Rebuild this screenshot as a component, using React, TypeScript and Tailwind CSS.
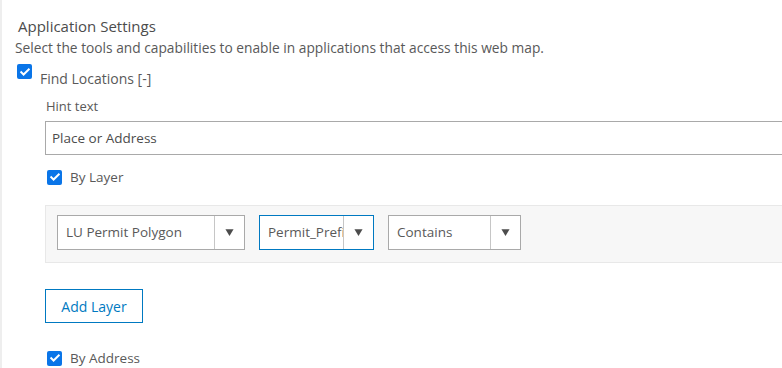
import React from "react";

function Check({ className = "" }: { className?: string }) {
  return (
    <span
      className={`inline-flex h-[15px] w-[15px] shrink-0 items-center justify-center rounded-[2px] bg-[#0a75e8] ${className}`}
    >
      <svg viewBox="0 0 16 16" className="h-[12px] w-[12px]" fill="none">
        <path d="M3 8.3l3.1 3.1L13 4.6" stroke="white" strokeWidth="2.6" strokeLinecap="square" />
      </svg>
    </span>
  );
}

function Select({
  label,
  width,
  divider,
  active = false,
}: {
  label: string;
  width: string;
  divider: string;
  active?: boolean;
}) {
  return (
    <div
      className={`flex h-[35px] ${width} items-stretch bg-white border ${
        active ? "border-[#0079c1]" : "border-[#a9a9a9]"
      }`}
    >
      <div className="flex flex-1 items-center overflow-hidden whitespace-nowrap pl-[8px] text-[13.5px] text-[#595959]">
        {label}
      </div>
      <div className={`flex ${divider} items-center justify-center border-l border-[#c6c6c6]`}>
        <svg viewBox="0 0 10 10" className="h-[9px] w-[9px]">
          <path d="M0.5 1.5h9L5 9z" fill="#4c4c4c" />
        </svg>
      </div>
    </div>
  );
}

export default function App() {
  return (
    <div
      className="h-[368px] w-[782px] overflow-hidden border-l-2 border-[#eeeeee] bg-white text-[#4c4c4c]"
      style={{ fontFamily: "'Open Sans', 'Liberation Sans', sans-serif" }}
    >
      <div className="pl-[13px] pt-[15px]">
        <h2 className="pl-[3px] text-[15px] leading-[22px] text-[#4c4c4c]">Application Settings</h2>
        <p className="mt-[1px] text-[13.75px] leading-[20px] text-[#595959]">
          Select the tools and capabilities to enable in applications that access this web map.
        </p>
        <div className="mt-[4px] flex items-start pl-[2px]">
          <Check className="mt-[2px]" />
          <span className="ml-[8px] mt-[7px] text-[14px] leading-[20px] text-[#595959]">
            Find Locations [-]
          </span>
        </div>

        <div className="pl-[30px]">
          <div className="mt-[7px] text-[13px] leading-[20px] text-[#595959] pl-[1px]">Hint text</div>
          <div className="mt-[5px] flex h-[34px] items-center border border-[#a9a9a9] pl-[6px] text-[13.5px] text-[#4c4c4c] -mr-[20px]">
            Place or Address
          </div>
          <div className="mt-[12px] flex items-center pl-[2px]">
            <Check />
            <span className="ml-[8px] text-[13.5px] leading-[20px] text-[#595959]">By Layer</span>
          </div>

          <div className="mt-[18px] -mr-[20px] flex h-[58px] items-start gap-[14px] border border-[#e8e8e8] bg-[#f7f7f7] pl-[11px] pt-[9px]">
            <Select label="LU Permit Polygon" width="w-[188px]" divider="w-[30px]" />
            <Select label="Permit_Prefix" width="w-[115px]" divider="w-[30px]" active />
            <Select label="Contains" width="w-[133px]" divider="w-[30px]" />
          </div>

          <button className="mt-[26px] h-[34px] w-[98px] border border-[#0079c1] bg-white text-[14px] text-[#0079c1]">
            Add Layer
          </button>

          <div className="mt-[25px] flex items-center pl-[2px]">
            <Check />
            <span className="ml-[8px] text-[13.5px] leading-[20px] text-[#595959]">By Address</span>
          </div>
        </div>
      </div>
    </div>
  );
}
